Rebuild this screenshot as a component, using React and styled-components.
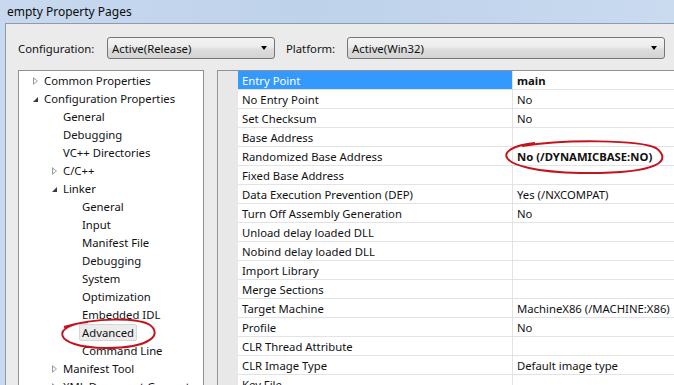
import React from 'react'
import styled, { createGlobalStyle } from 'styled-components'

const GlobalStyle = createGlobalStyle`
    html, body {
        margin: 0;
        padding: 0;
        overflow: hidden;
        background: #ebebeb;
    }
    body {
        font-family: "Noto Sans", "Open Sans", sans-serif;
        font-size: 11.3px;
        color: #111;
    }
`

const Window = styled.div`
    position: relative;
    width: 674px;
    height: 385px;
    overflow: hidden;
    display: flex;
    flex-direction: column;
    background: #c7d9ef;
`
const TitleBar = styled.div`
    height: 23px;
    flex: none;
    display: flex;
    align-items: center;
    padding-left: 7px;
    font-size: 12px;
    color: #0c0c0c;
    background: linear-gradient(to right, #c8d9ef 0%, #bed2ea 45%, #c2d5ec 70%, #cadbf0 100%);
`
const Frame = styled.div`
    flex: 1;
    display: flex;
    padding-left: 5px;
    background: #c7d9ef;
`
const Body = styled.div`
    flex: 1;
    display: flex;
    flex-direction: column;
    background: #ebebeb;
    border-left: 1px solid #8c9cb0;
    border-top: 1px solid #8c9cb0;
    padding: 13px 0 0 12px;
`
const Toolbar = styled.div`
    display: flex;
    align-items: center;
    height: 22px;
`
const Label = styled.span`
    width: ${props => props.width}px;
    flex: none;
`
const Combo = styled.div`
    box-sizing: border-box;
    width: ${props => props.width}px;
    height: 22px;
    flex: none;
    display: flex;
    align-items: center;
    justify-content: space-between;
    padding: 0 7px 0 4px;
    margin-right: ${props => props.gap || 0}px;
    border: 1px solid #767676;
    border-radius: 3px;
    background: linear-gradient(#f3f3f3 0%, #ececec 45%, #dedede 55%, #d3d3d3 100%);
`
const ComboArrow = styled.span`
    width: 0;
    height: 0;
    border-left: 3.5px solid transparent;
    border-right: 3.5px solid transparent;
    border-top: 4px solid #000;
`
const Main = styled.div`
    flex: 1;
    display: flex;
    gap: 13px;
    margin-top: 11px;
    min-height: 0;
`
const TreePanel = styled.div`
    width: 184px;
    flex: none;
    background: #fff;
    border: 1px solid #8e9399;
    border-bottom: none;
`
const TreeRow = styled.div`
    position: relative;
    height: 18px;
    display: flex;
    align-items: center;
    padding-left: ${props => 25 + props.level * 19}px;
    white-space: nowrap;
`
const Collapsed = styled.span`
    position: absolute;
    left: ${props => 14 + props.level * 19}px;
    top: 6px;
    width: 0;
    height: 0;
    border-top: 4px solid transparent;
    border-bottom: 4px solid transparent;
    border-left: 5px solid #9a9a9a;
    &::after {
        content: '';
        position: absolute;
        left: -4px;
        top: -2.5px;
        border-top: 2.5px solid transparent;
        border-bottom: 2.5px solid transparent;
        border-left: 3px solid #fff;
    }
`
const Expanded = styled.span`
    position: absolute;
    left: ${props => 14 + props.level * 19}px;
    top: 8px;
    width: 0;
    height: 0;
    border-left: 5px solid transparent;
    border-bottom: 5px solid #3a3a3a;
`
const TreeText = styled.span`
    padding: 0 2px;
    margin-left: -3px;
    line-height: 15px;
    border: 1px solid ${props => props.selected ? '#d6d6d6' : 'transparent'};
    border-radius: 2px;
    background: ${props => props.selected ? '#ececec' : 'transparent'};
`
const GridPanel = styled.div`
    flex: 1;
    display: flex;
    margin-right: -20px;
    border: 1px solid #8e9399;
    border-bottom: none;
    border-right: none;
    background: #fff;
`
const Margin = styled.div`
    width: 20px;
    flex: none;
    background: #e8e8e8;
`
const Grid = styled.div`
    flex: 1;
`
const GridRow = styled.div`
    display: grid;
    grid-template-columns: 275px 1fr;
    height: 19px;
    box-sizing: border-box;
    border-bottom: 1px solid #e3e3e3;
`
const NameCell = styled.div`
    display: flex;
    align-items: center;
    padding-left: 4px;
    white-space: nowrap;
    background: ${props => props.selected ? '#3399ff' : 'transparent'};
    color: ${props => props.selected ? '#fff' : 'inherit'};
    border-right: 1px solid #e3e3e3;
`
const ValueCell = styled.div`
    display: flex;
    align-items: center;
    padding-left: 4px;
    white-space: nowrap;
    font-weight: ${props => props.bold ? 700 : 400};
`
const Overlay = styled.svg`
    position: absolute;
    left: 0;
    top: 0;
    pointer-events: none;
`

const tree = [
    { label: 'Common Properties', level: 0, arrow: 'closed' },
    { label: 'Configuration Properties', level: 0, arrow: 'open' },
    { label: 'General', level: 1 },
    { label: 'Debugging', level: 1 },
    { label: 'VC++ Directories', level: 1 },
    { label: 'C/C++', level: 1, arrow: 'closed' },
    { label: 'Linker', level: 1, arrow: 'open' },
    { label: 'General', level: 2 },
    { label: 'Input', level: 2 },
    { label: 'Manifest File', level: 2 },
    { label: 'Debugging', level: 2 },
    { label: 'System', level: 2 },
    { label: 'Optimization', level: 2 },
    { label: 'Embedded IDL', level: 2 },
    { label: 'Advanced', level: 2, selected: true },
    { label: 'Command Line', level: 2 },
    { label: 'Manifest Tool', level: 1, arrow: 'closed' },
    { label: 'XML Document Generator', level: 1, arrow: 'closed' },
]

const props = [
    ['Entry Point', 'main', true, true],
    ['No Entry Point', 'No'],
    ['Set Checksum', 'No'],
    ['Base Address', ''],
    ['Randomized Base Address', 'No (/DYNAMICBASE:NO)', true],
    ['Fixed Base Address', ''],
    ['Data Execution Prevention (DEP)', 'Yes (/NXCOMPAT)'],
    ['Turn Off Assembly Generation', 'No'],
    ['Unload delay loaded DLL', ''],
    ['Nobind delay loaded DLL', ''],
    ['Import Library', ''],
    ['Merge Sections', ''],
    ['Target Machine', 'MachineX86 (/MACHINE:X86)'],
    ['Profile', 'No'],
    ['CLR Thread Attribute', ''],
    ['CLR Image Type', 'Default image type'],
    ['Key File', ''],
]

const App = () => {
  return (
    <Window>
        <GlobalStyle />
        <TitleBar>empty Property Pages</TitleBar>
        <Frame>
            <Body>
                <Toolbar>
                    <Label width={89}>Configuration:</Label>
                    <Combo width={168} gap={11}>
                        Active(Release)
                        <ComboArrow />
                    </Combo>
                    <Label width={61}>Platform:</Label>
                    <Combo width={318}>
                        Active(Win32)
                        <ComboArrow />
                    </Combo>
                </Toolbar>
                <Main>
                    <TreePanel>
                        {tree.map((item, i) => (
                            <TreeRow key={i} level={item.level}>
                                {item.arrow === 'closed' && <Collapsed level={item.level} />}
                                {item.arrow === 'open' && <Expanded level={item.level} />}
                                <TreeText selected={item.selected}>{item.label}</TreeText>
                            </TreeRow>
                        ))}
                    </TreePanel>
                    <GridPanel>
                        <Margin />
                        <Grid>
                            {props.map(([name, value, bold, selected], i) => (
                                <GridRow key={i}>
                                    <NameCell selected={selected}>{name}</NameCell>
                                    <ValueCell bold={bold}>{value}</ValueCell>
                                </GridRow>
                            ))}
                        </Grid>
                    </GridPanel>
                </Main>
            </Body>
        </Frame>
        <Overlay width="674" height="385">
            <path d="M 88 322 C 52 325, 50 347, 106 348 C 152 348, 162 334, 150 325 C 138 318, 96 317, 64 327"
                  fill="none" stroke="#c3141d" strokeWidth="2" />
            <path d="M 535 143 C 492 147, 490 171, 580 173 C 662 174, 672 160, 656 148 C 640 140, 565 139, 522 146"
                  fill="none" stroke="#c3141d" strokeWidth="2" />
        </Overlay>
    </Window>
  )
}

export default App
